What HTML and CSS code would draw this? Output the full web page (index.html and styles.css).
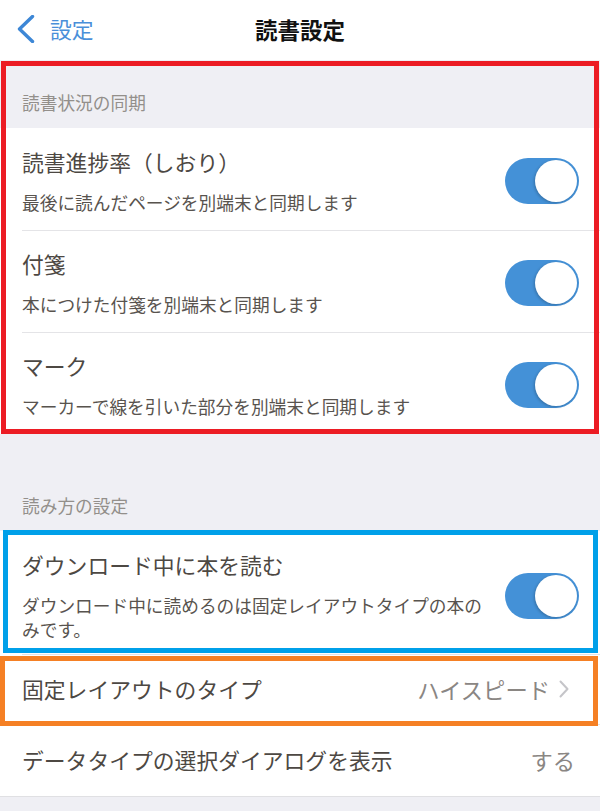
FILE: index.html
```html
<!DOCTYPE html>
<html lang="ja">
<head>
<meta charset="utf-8">
<title>読書設定</title>
<link rel="stylesheet" href="styles.css">
</head>
<body>
<header class="nav">
  <div class="nav-back">
    <svg class="nav-chevron" viewBox="0 0 18 28" aria-hidden="true"><polyline points="15.5,1.5 2.5,14 15.5,26.5" fill="none" stroke="currentColor" stroke-width="3.4" stroke-linecap="round" stroke-linejoin="round"/></svg>
    <span>設定</span>
  </div>
  <h1 class="nav-title">読書設定</h1>
  <div></div>
</header>

<section class="group mark mark-red">
  <div class="group-head">読書状況の同期</div>
  <div class="row">
    <div class="row-text">
      <div class="row-title">読書進捗率（しおり）</div>
      <div class="row-sub">最後に読んだページを別端末と同期します</div>
    </div>
    <span class="toggle"></span>
  </div>
  <div class="row">
    <div class="row-text">
      <div class="row-title">付箋</div>
      <div class="row-sub">本につけた付箋を別端末と同期します</div>
    </div>
    <span class="toggle"></span>
  </div>
  <div class="row">
    <div class="row-text">
      <div class="row-title">マーク</div>
      <div class="row-sub">マーカーで線を引いた部分を別端末と同期します</div>
    </div>
    <span class="toggle"></span>
  </div>
</section>

<section class="group">
  <div class="group-head group-head-2">読み方の設定</div>
  <div class="row row-wrap mark mark-blue">
    <div class="row-text">
      <div class="row-title">ダウンロード中に本を読む</div>
      <div class="row-sub">ダウンロード中に読めるのは固定レイアウトタイプの本のみです。</div>
    </div>
    <span class="toggle"></span>
  </div>
  <div class="row row-link mark mark-orange">
    <div class="row-title row-grow">固定レイアウトのタイプ</div>
    <span class="row-value">ハイスピード</span>
    <svg class="row-chevron" viewBox="0 0 10 18" aria-hidden="true"><polyline points="1.5,1.5 8.5,9 1.5,16.5" fill="none" stroke="currentColor" stroke-width="2" stroke-linecap="round" stroke-linejoin="round"/></svg>
  </div>
  <div class="row row-last">
    <div class="row-title row-grow">データタイプの選択ダイアログを表示</div>
    <span class="row-value">する</span>
  </div>
</section>
</body>
</html>
```

FILE: styles.css
```css
* { box-sizing: border-box; }

body {
  margin: 0;
  background: #efeff4;
  font-family: "Noto Sans CJK JP", "Noto Sans", sans-serif;
  color: #4d4843;
}

.nav {
  height: 60px;
  padding-bottom: 3px;
  background: #fff;
  display: grid;
  grid-template-columns: 1fr auto 1fr;
  align-items: center;
}

.nav-back {
  display: flex;
  align-items: center;
  gap: 15px;
  padding-left: 17px;
  color: #4a8fd9;
  font-size: 21.8px;
  line-height: 28px;
}

.nav-chevron {
  width: 18px;
  height: 28px;
  color: #3d87d6;
}

.nav-title {
  margin: 0;
  font-size: 22.5px;
  font-weight: 700;
  color: #111;
  line-height: 28px;
}

.group-head {
  padding: 30px 22px 14px;
  font-size: 17.7px;
  line-height: 24px;
  color: #938f8b;
}

.group-head-2 {
  padding-top: 59px;
}

.row {
  position: relative;
  background: #fff;
  display: flex;
  align-items: center;
  gap: 16px;
  padding: 20px 21px 16px 22px;
}

.row + .row::before {
  content: "";
  position: absolute;
  left: 22px;
  right: 0;
  top: 0;
  height: 1px;
  background: #e4e4e7;
}

.row-text {
  flex: 1;
  min-width: 0;
}

.row-grow {
  flex: 1;
}

.row-title {
  font-size: 21.8px;
  line-height: 28px;
}

.row-sub {
  margin-top: 14px;
  font-size: 17.7px;
  line-height: 24px;
  color: #58534e;
}

.row-wrap {
  padding-bottom: 13px;
}

.row-link {
  padding: 21px 31px 21px 22px;
  gap: 9px;
}

.row-last {
  padding: 22px 25px 22px 22px;
  border-bottom: 1px solid #e0e0e3;
}

.row-value {
  font-size: 22.3px;
  line-height: 28px;
  color: #8a8683;
}

.row-chevron {
  width: 10px;
  height: 18px;
  color: #c5c5c9;
}

.toggle {
  flex: none;
  position: relative;
  width: 74px;
  height: 46px;
  border-radius: 23px;
  background: #4491d7;
}

.toggle::after {
  content: "";
  position: absolute;
  right: 2px;
  top: 2px;
  width: 42px;
  height: 42px;
  border-radius: 50%;
  background: #fff;
  box-shadow: -1px 1px 3px rgba(0, 0, 0, 0.22);
}

.mark {
  position: relative;
}

.mark::after {
  content: "";
  position: absolute;
  border: 5px solid;
  pointer-events: none;
  z-index: 2;
}

.mark-red::after {
  top: 1px;
  left: 1px;
  right: 1px;
  bottom: 0;
  border-color: #ec1c24;
}

.mark-blue::after {
  top: -1px;
  left: 3px;
  right: 2px;
  bottom: 1px;
  border-color: #00a0e9;
}

.mark-orange::after {
  top: 2px;
  left: 0;
  right: 2px;
  bottom: -2px;
  border-color: #f58024;
}
```
